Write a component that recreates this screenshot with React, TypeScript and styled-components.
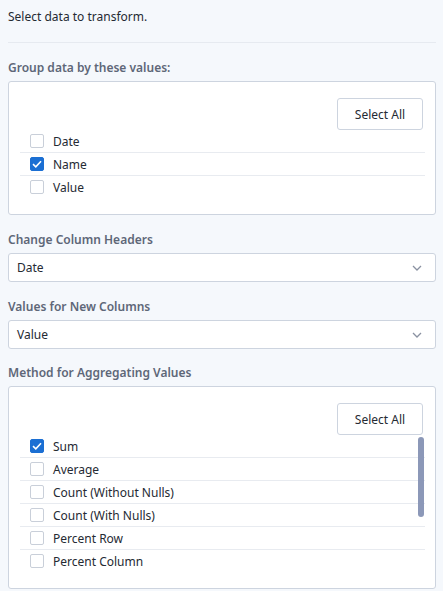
import React from "react";
import styled, { createGlobalStyle } from "styled-components";

const GlobalStyle = createGlobalStyle`
  html, body {
    margin: 0;
    padding: 0;
    background: #f5f8fc;
  }
  body {
    font-family: "Segoe UI", "Noto Sans", "Open Sans", sans-serif;
    color: #252a33;
  }
`;

const Panel = styled.div`
  width: 443px;
  height: 591px;
  box-sizing: border-box;
  padding: 7px 7px 0 8px;
  overflow: hidden;
`;

const Intro = styled.div`
  font-size: 12px;
  line-height: 20px;
  padding-bottom: 15px;
  border-bottom: 1px solid #e6eaf0;
`;

const Section = styled.div<{ $top: number }>`
  margin-top: ${(p) => p.$top}px;
`;

const Label = styled.div`
  font-size: 12px;
  font-weight: 600;
  color: #5e6778;
  line-height: 16px;
  margin-bottom: 5px;
`;

const Box = styled.div`
  background: #fff;
  border: 1px solid #cdd4df;
  border-radius: 3px;
  padding: 16px 10px 16px 11px;
`;

const BoxHead = styled.div`
  display: flex;
  justify-content: flex-end;
  padding-right: 2px;
`;

const Button = styled.button`
  font-family: inherit;
  font-size: 12px;
  color: #252a33;
  background: #fff;
  border: 1px solid #cdd4df;
  border-radius: 3px;
  height: 32px;
  width: 86px;
  padding: 0;
`;

const ListWrap = styled.div`
  position: relative;
`;

const Row = styled.label`
  display: flex;
  align-items: center;
  height: 22px;
  padding-left: 10px;
  font-size: 12px;
  & + & {
    border-top: 1px solid #e8ebf0;
  }
`;

const Check = styled.span<{ $on: boolean }>`
  width: 14px;
  height: 14px;
  box-sizing: border-box;
  border-radius: 2px;
  border: 1px solid ${(p) => (p.$on ? "#1b6fd3" : "#c9cfd9")};
  background: ${(p) => (p.$on ? "#1b6fd3" : "#fff")};
  margin-right: 9px;
  display: flex;
  align-items: center;
  justify-content: center;
`;

const Thumb = styled.div`
  position: absolute;
  right: 1px;
  top: 2px;
  width: 6px;
  height: 80px;
  border-radius: 3px;
  background: #8c98b8;
`;

const Select = styled.div`
  display: flex;
  align-items: center;
  justify-content: space-between;
  height: 27px;
  background: #fff;
  border: 1px solid #cdd4df;
  border-radius: 3px;
  padding: 0 13px 0 8px;
  font-size: 12px;
`;

const Tick = () => (
  <svg width="10" height="8" viewBox="0 0 10 8">
    <path d="M1 4.2 L3.8 6.8 L9 1.2" fill="none" stroke="#fff" strokeWidth="1.6" />
  </svg>
);

const Chevron = () => (
  <svg width="10" height="6" viewBox="0 0 10 6">
    <path d="M1 1 L5 5 L9 1" fill="none" stroke="#8a91a1" strokeWidth="1.3" />
  </svg>
);

type Item = { name: string; on?: boolean };

const CheckList = ({ items, scroll }: { items: Item[]; scroll?: boolean }) => (
  <Box>
    <BoxHead>
      <Button>Select All</Button>
    </BoxHead>
    <ListWrap>
      {items.map((it) => (
        <Row key={it.name}>
          <Check $on={!!it.on}>{it.on && <Tick />}</Check>
          {it.name}
        </Row>
      ))}
      {scroll && <Thumb />}
    </ListWrap>
  </Box>
);

const groupItems: Item[] = [{ name: "Date" }, { name: "Name", on: true }, { name: "Value" }];

const methodItems: Item[] = [
  { name: "Sum", on: true },
  { name: "Average" },
  { name: "Count (Without Nulls)" },
  { name: "Count (With Nulls)" },
  { name: "Percent Row" },
  { name: "Percent Column" },
];

export default function App() {
  return (
    <Panel>
      <GlobalStyle />
      <Intro>Select data to transform.</Intro>
      <Section $top={17}>
        <Label>Group data by these values:</Label>
        <CheckList items={groupItems} />
      </Section>
      <Section $top={17}>
        <Label>Change Column Headers</Label>
        <Select>
          Date
          <Chevron />
        </Select>
      </Section>
      <Section $top={17}>
        <Label>Values for New Columns</Label>
        <Select>
          Value
          <Chevron />
        </Select>
      </Section>
      <Section $top={16}>
        <Label>Method for Aggregating Values</Label>
        <CheckList items={methodItems} scroll />
      </Section>
    </Panel>
  );
}
